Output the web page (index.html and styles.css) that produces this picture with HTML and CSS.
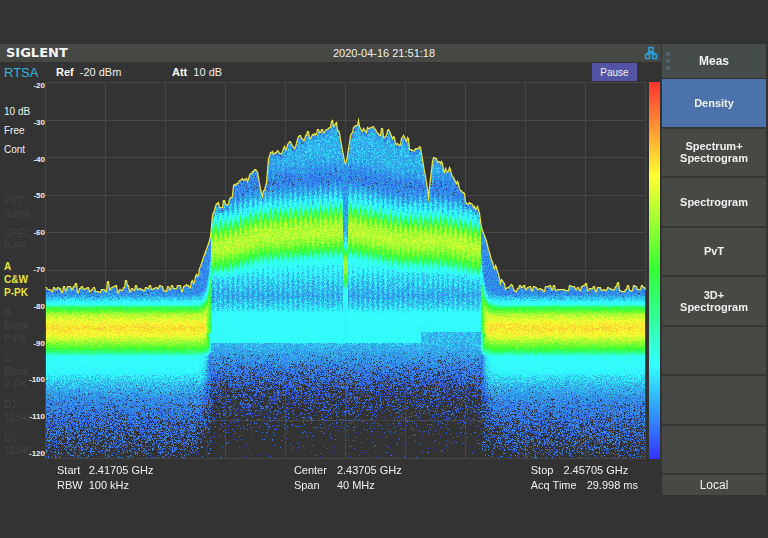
FILE: index.html
```
<!DOCTYPE html>
<html lang="en">
  <head>
    <meta charset="utf-8">
    <meta name="viewport" content="width=device-width, initial-scale=1">
    <title>RTSA - Density</title>
    <link rel="stylesheet" href="styles.css">
  </head>

  <body>
    <div class="screen">
      <main class="analyzer">
        <header class="topbar">
          <div class="brand">SIGLENT</div>
          <div class="clock">2020-04-16 21:51:18</div>
          <svg class="lan" viewBox="0 0 14 14" width="14" height="14" aria-label="LAN">
            <path d="M5 1.500h4v4h-4zM1.500 8.500h4v4h-4zM8.500 8.500h4v4h-4zM7 5.500v1.500M3.500 8.500V7h7v1.500"/>
          </svg>
        </header>
        <div class="params">
          <div class="mode">RTSA</div>
          <div class="ref"><b>Ref</b> -20 dBm</div>
          <div class="att"><b>Att</b> 10 dB</div>
          <button class="pause" type="button">Pause</button>
        </div>
        <div class="plot">
          <div class="side">
            <div class="status">
              <div class="sweep">
                <div>10 dB</div>
                <div>Free</div>
                <div>Cont</div>
              </div>
              <div class="trace off">PVT<br>Samp</div>
              <div class="trace off">SPEC<br>P-PK</div>
              <div class="trace on">A<br>C&amp;W<br>P-PK</div>
              <div class="trace off">B<br>Blank<br>P-PK</div>
              <div class="trace off">C<br>Blank<br>P-PK</div>
              <div class="trace off">D1<br>12345</div>
              <div class="trace off">D2<br>12345</div>
            </div>
            <div class="axis">
              <span>-20</span>
              <span>-30</span>
              <span>-40</span>
              <span>-50</span>
              <span>-60</span>
              <span>-70</span>
              <span>-80</span>
              <span>-90</span>
              <span>-100</span>
              <span>-110</span>
              <span>-120</span>
            </div>
          </div>
          <canvas id="density" class="density" width="601" height="377"></canvas>
          <div class="scale"></div>
        </div>
        <footer class="readout">
          <div class="pairs">
            <span>Start</span><span>2.41705 GHz</span>
            <span>RBW</span><span>100 kHz</span>
          </div>
          <div class="pairs wide">
            <span>Center</span><span>2.43705 GHz</span>
            <span>Span</span><span>40 MHz</span>
          </div>
          <div>
            <div class="line"><span>Stop</span><span>2.45705 GHz</span></div>
            <div class="line"><span>Acq Time</span><span>29.998 ms</span></div>
          </div>
        </footer>
      </main>

      <nav class="menu">
        <h1 class="menu-title">
          <svg class="grip" viewBox="0 0 4 20" width="4" height="20" aria-hidden="true">
            <circle cx="2" cy="3" r="2"/><circle cx="2" cy="10" r="2"/><circle cx="2" cy="17" r="2"/>
          </svg>
          Meas
        </h1>
        <button class="item active" type="button">Density</button>
        <button class="item" type="button">Spectrum+<br>Spectrogram</button>
        <button class="item" type="button">Spectrogram</button>
        <button class="item" type="button">PvT</button>
        <button class="item" type="button">3D+<br>Spectrogram</button>
        <div class="item"></div>
        <div class="item"></div>
        <div class="item"></div>
        <button class="local" type="button">Local</button>
      </nav>
    </div>
    <script src="density.js"></script>
  </body>
</html>
```
FILE: styles.css
```
*, *:before, *:after {
  box-sizing: border-box;
}
body {
  margin: 0;
  padding: 44px 0;
  font-family: "Liberation Sans", Arial, sans-serif;
  font-size: 11px;
  color: #f0f0f0;
  background: #333;
}
button {
  border: 0;
  padding: 0;
  font: inherit;
  color: inherit;
  cursor: pointer;
}
.screen {
  display: grid;
  grid-template-columns: minmax(0, 1fr) 106px;
}
.topbar {
  display: grid;
  grid-template-columns: 1fr auto 1fr;
  align-items: center;
  height: 18px;
  padding: 0 3px 0 6px;
  margin-right: 1px;
  background: #464843;
}
.brand {
  font-family: "DejaVu Sans", sans-serif;
  font-size: 13px;
  line-height: 18px;
  font-weight: bold;
  color: #f4f4f4;
}
.clock {
  margin-left: 104px;
}
.lan {
  justify-self: end;
  fill: none;
  stroke: #2b9fd8;
  stroke-width: 1.5;
}
.params {
  display: flex;
  align-items: center;
  height: 20px;
  padding: 0 25px 0 4px;
}
.params b {
  margin-right: 3px;
  color: #fff;
}
.mode {
  width: 52px;
  font-size: 13px;
  color: #35b4dc;
}
.ref {
  width: 116px;
}
.pause {
  width: 45px;
  height: 18px;
  margin-left: auto;
  font-size: 10px;
  background: #5355a4;
}
.plot {
  display: grid;
  grid-template-columns: 45px minmax(0, 1fr) 11px;
  padding-right: 2px;
}
.side {
  display: grid;
  font-size: 10px;
}
.status, .axis {
  grid-area: 1 / 1;
}
.status {
  display: flex;
  flex-direction: column;
  gap: 7px;
  padding: 20px 0 0 4px;
  line-height: 13px;
}
.sweep {
  margin-bottom: 28px;
  line-height: 19px;
}
.on {
  font-weight: bold;
  color: #e8e337;
}
.off {
  color: #424342;
}
.axis {
  display: flex;
  flex-direction: column;
  justify-content: space-between;
  align-items: flex-end;
  padding-bottom: 2px;
  font-size: 8px;
  font-weight: bold;
  line-height: 7px;
}
.density {
  display: block;
  width: 100%;
  padding-right: 3px;
}
.scale {
  background: linear-gradient(to bottom, #ff3232, #ffff32 25%, #32ff32 50%, #32ffff 75%, #3232ff);
}
.readout {
  display: grid;
  grid-template-columns: 1fr 1fr auto;
  padding: 4px 24px 2px 57px;
  line-height: 15px;
}
.pairs {
  display: grid;
  grid-template-columns: auto 1fr;
  column-gap: 6px;
}
.wide {
  column-gap: 10px;
}
.line {
  display: flex;
  gap: 10px;
}
.menu {
  display: flex;
  flex-direction: column;
  padding-right: 2px;
}
.menu-title {
  display: grid;
  grid-template-columns: 8px 1fr 8px;
  align-items: center;
  height: 35px;
  margin: 0;
  border-bottom: 1px solid #333;
  font-size: 12px;
  text-align: center;
  background: #454c4a;
}
.grip {
  justify-self: end;
  fill: #5c6a70;
}
.item {
  flex: 1;
  border-bottom: 2px solid #363735;
  font-weight: bold;
  line-height: 12px;
  background: #474944;
}
.active {
  background: #4b72aa;
}
.local {
  height: 20px;
  font-size: 12px;
  background: #474944;
}
```
FILE: density.js
```
var canvas = document.getElementById('density');
var ctx = canvas.getContext('2d');
var W = canvas.width;
var H = canvas.height;

// edges of the occupied channel, and its carrier notch
var LEFT = 166;
var RIGHT = 435;
var NOTCH = 300;

// max hold trace
var peaks = [
  [0, 207], [140, 206], [146, 201], [152, 192], [158, 175], [163, 161], [165, 154],
  [167, 133], [171, 122], [181, 121], [186, 113], [193, 101], [202, 96], [209, 84],
  [212, 90], [215, 106], [217, 115], [221, 100], [223, 76], [225, 72], [230, 68],
  [236, 71], [239, 64], [246, 61], [250, 65], [253, 56], [261, 56], [265, 57],
  [269, 50], [280, 51], [284, 45], [291, 43], [294, 51], [297, 68], [300, 83],
  [302, 73], [305, 53], [308, 46], [312, 44], [313, 39], [316, 45], [323, 49],
  [328, 45], [332, 51], [339, 53], [343, 49], [348, 57], [353, 61], [358, 56],
  [363, 63], [369, 68], [375, 65], [378, 83], [381, 100], [383, 114], [385, 96],
  [387, 79], [393, 77], [401, 91], [404, 88], [410, 98], [416, 109], [421, 118],
  [428, 126], [432, 122], [434, 131], [436, 145], [441, 159], [446, 178],
  [451, 185], [455, 199], [460, 205], [465, 202], [470, 206], [600, 206]
];

// middle of the signal band
var band = [
  [166, 165], [185, 162], [215, 153], [250, 150], [295, 147], [306, 147],
  [355, 157], [400, 158], [435, 166]
];

// hit density (0..1) against y, without and with a signal
var noise = [
  [204, 0.07], [212, 0.13], [218, 0.22], [222, 0.27], [225, 0.45], [232, 0.65],
  [240, 0.75], [246, 0.79], [252, 0.75], [259, 0.64], [266, 0.52], [270, 0.4],
  [274, 0.26], [290, 0.24], [303, 0.18], [318, 0.12], [340, 0.09], [377, 0.06]
];
var floor = [
  [261, 0.18], [275, 0.14], [290, 0.1], [310, 0.07], [377, 0.06]
];
var noiseGaps = [
  [300, 0], [315, 0.04], [330, 0.18], [350, 0.48], [365, 0.7], [377, 0.88]
];
var floorGaps = [
  [268, 0], [280, 0.1], [295, 0.32], [310, 0.6], [325, 0.75], [340, 0.9], [355, 0.97], [377, 0.985]
];

var seed = 2437;
function random() {
  seed = (seed * 1664525 + 1013904223) % 4294967296;
  return seed / 4294967296;
}

function lerp(points, x) {
  if (x <= points[0][0]) return points[0][1];
  for (var i = 1; i < points.length; i++) {
    if (x <= points[i][0]) {
      var a = points[i - 1], b = points[i];
      return a[1] + (b[1] - a[1]) * (x - a[0]) / (b[0] - a[0]);
    }
  }
  return points[points.length - 1][1];
}

function color(t) {
  t = Math.max(0, Math.min(1, t)) * 4;
  var f = 50 + 205 * (t % 1);
  if (t < 1) return [50, f, 255];
  if (t < 2) return [50, 255, 305 - f];
  if (t < 3) return [f, 255, 50];
  return [255, 305 - f, 50];
}

function signal(x, y) {
  var stripe = Math.cos(x * 2 * Math.PI / 5);
  var d = y - lerp(band, x);
  var near = Math.abs(x - NOTCH);
  var v;
  if (near < 3) {
    return lerp([[90, 0.13], [145, 0.16], [160, 0.25], [168, 0.5], [175, 0.64],
      [188, 0.6], [197, 0.45], [204, 0.26], [224, 0.24]], y - near * 3);
  }
  if (y >= (x > 375 ? 250 : 261)) return null;
  d += stripe * (d < 0 ? 5 : 3);
  v = lerp([[-90, 0.17], [-72, 0.17], [-60, 0.13], [-52, 0.1], [-44, 0.13], [-36, 0.19],
    [-27, 0.25], [-22, 0.32], [-18, 0.48], [-8, 0.64], [3, 0.67], [12, 0.6], [20, 0.48],
    [27, 0.27], [40, 0.24]], d);
  if (y > 182 && d > 30) {
    v = lerp([[182, 0.25], [200, 0.2], [214, 0.16], [225, 0.21], [231, 0.25]], y);
    if (y < 229) v += stripe * 0.025;
  }
  return v;
}

function drawGrid() {
  ctx.fillStyle = '#333';
  ctx.fillRect(0, 0, W, H);
  ctx.strokeStyle = '#474747';
  ctx.beginPath();
  for (var i = 0; i <= 10; i++) {
    var x = Math.round(i * (W - 1) / 10) + 0.5;
    var y = Math.round(i * (H - 1) / 10) + 0.5;
    ctx.moveTo(x, 0);
    ctx.lineTo(x, H);
    ctx.moveTo(0, y);
    ctx.lineTo(W, y);
  }
  ctx.stroke();
}

function drawDensity(trace) {
  var image = ctx.getImageData(0, 0, W, H);
  for (var x = 1; x < W - 1; x++) {
    var out = x < LEFT ? LEFT - x : x - RIGHT;
    for (var y = Math.ceil(trace[x]); y < H - 1; y++) {
      var v, gap;
      if (out > 0) {
        // the noise band bends up towards the channel edge
        var lift = Math.exp(-out / 3) * 75;
        var yy = y;
        if (y < 245) yy = 245 - (245 - y) * 41 / (41 + lift);
        v = lerp(noise, yy);
        if (yy < 220) v = Math.max(v, 0.12);
        v = Math.min(v, 0.42 + out * 0.05);
        if (y > 250) v -= Math.exp(-out / 3) * 0.3;
        v = Math.max(v, 0.09);
        gap = lerp(noiseGaps, y + Math.exp(-out / 8) * 35);
      } else {
        v = signal(x, y);
        gap = 0;
        if (v === null || y >= 261) {
          v = lerp(floor, y);
          gap = lerp(floorGaps, y);
        } else if (v < 0.12) {
          gap = 0.05;
        }
      }
      if (y - trace[x] < 6) {
        v = Math.min(v, 0.13);
        gap = Math.max(gap, 0.04);
      }
      if (random() < gap) continue;
      v += (random() - 0.5) * (v > 0.23 && v < 0.28 ? 0.03 : 0.1);
      var c = color(v);
      var alpha = v < 0.2 ? 0.9 : 1;
      var i = (y * W + x) * 4;
      for (var k = 0; k < 3; k++) {
        image.data[i + k] = c[k] * alpha + 51 * (1 - alpha);
      }
    }
  }
  ctx.putImageData(image, 0, 0);
}

function drawTrace(trace) {
  ctx.strokeStyle = '#ece436';
  ctx.lineWidth = 1.25;
  ctx.beginPath();
  for (var x = 0; x < W; x++) {
    ctx.lineTo(x + 0.5, trace[x] + 0.5);
  }
  ctx.stroke();
}

var trace = [];
var wobble = 0;
for (var x = 0; x < W; x++) {
  if (x % 2 === 0) {
    wobble = (random() - 0.5) * 7;
    if (random() < 0.07) wobble -= 5;
  }
  var steep = Math.abs(lerp(peaks, x + 2) - lerp(peaks, x - 2)) > 10;
  trace.push(Math.round(lerp(peaks, x) + (steep ? 0 : wobble)));
}
drawGrid();
drawDensity(trace);
drawTrace(trace);
```
